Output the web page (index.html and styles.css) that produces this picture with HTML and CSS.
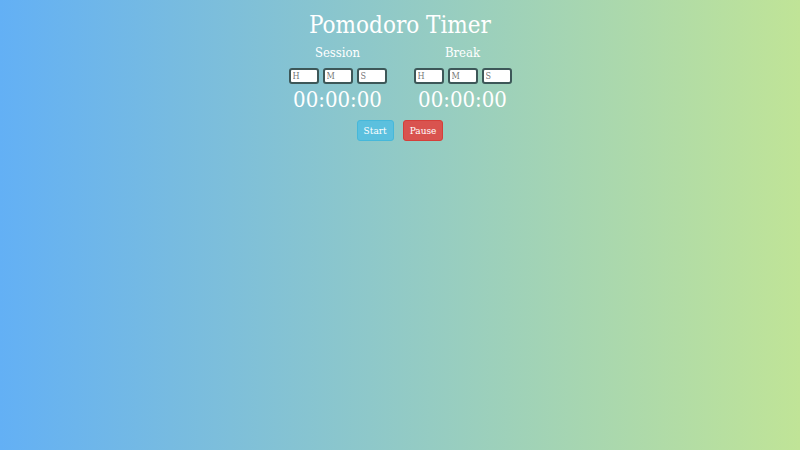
FILE: index.html
```html
<!DOCTYPE html>
<html lang="en">
<head>
    <meta charset="UTF-8">
    <meta name="viewport" content="width=device-width, initial-scale=1.0">
    <title>Pomodoro Timer</title>
    <link rel="stylesheet" href="styles.css">
</head>
<body>

    <div class="container">
        <h1>Pomodoro Timer</h1>

        <div class="timers">
            <div class="timer">
                <h3>Session</h3>
                <div class="fields">
                    <input type="text" id="sessionH" placeholder="H">
                    <input type="text" id="sessionM" placeholder="M">
                    <input type="text" id="sessionS" placeholder="S">
                </div>
                <div class="clock" id="sessionClock">00:00:00</div>
            </div>

            <div class="timer">
                <h3>Break</h3>
                <div class="fields">
                    <input type="text" id="breakH" placeholder="H">
                    <input type="text" id="breakM" placeholder="M">
                    <input type="text" id="breakS" placeholder="S">
                </div>
                <div class="clock" id="breakClock">00:00:00</div>
            </div>
        </div>

        <div class="controls">
            <button class="btn btn-start" id="start">Start</button>
            <button class="btn btn-pause" id="pause">Pause</button>
        </div>
    </div>

</body>
</html>
```

FILE: styles.css
```css
/* Basic styling */
html, body {
    height: 100%;
}

body {
    font-family: "DejaVu Serif Condensed", "DejaVu Serif", serif;
    font-stretch: condensed;
    margin: 0;
    padding: 0;
    color: #fff;
    background: linear-gradient(to right, #63b0f5, #c0e497);
}

.container {
    display: flex;
    flex-direction: column;
    align-items: center;
}

h1 {
    font-weight: normal;
    font-size: 24px;
    margin: 10px 0 0 0;
    line-height: 30px;
}

.timers {
    display: flex;
    gap: 27px;
    margin-top: 4px;
}

.timer {
    display: flex;
    flex-direction: column;
    align-items: center;
}

h3 {
    font-weight: normal;
    font-size: 13px;
    line-height: 18px;
    margin: 0 0 6px 0;
}

.fields {
    display: flex;
    gap: 4px;
}

input[type="text"] {
    width: 30px;
    height: 16px;
    padding: 0 2px;
    border: 2px solid #3d5758;
    border-radius: 3px;
    box-sizing: border-box;
    font-family: inherit;
    font-size: 9px;
    background-color: #fff;
}

input::placeholder {
    color: #777;
}

.clock {
    font-size: 22px;
    line-height: 30px;
    margin-top: 1px;
}

.controls {
    display: flex;
    gap: 9px;
    margin-top: 5px;
}

.btn {
    height: 21px;
    padding: 0 6px;
    border: 1px solid transparent;
    border-radius: 3px;
    font-family: inherit;
    font-size: 10px;
    color: #fff;
    cursor: pointer;
}

.btn-start {
    background-color: #5bc0de;
    border-color: #46b8da;
}

.btn-pause {
    background-color: #d9534f;
    border-color: #d43f3a;
}
```
